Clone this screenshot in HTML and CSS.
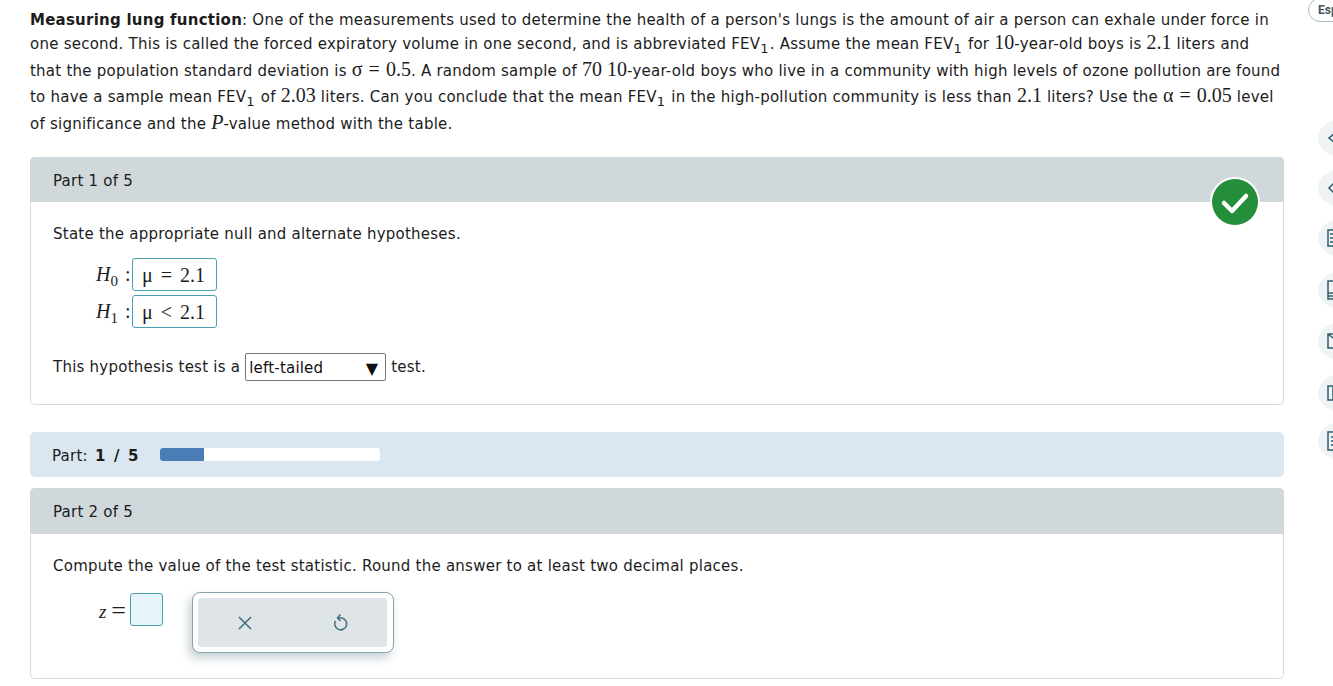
FILE: index.html
```html
<!DOCTYPE html>
<html lang="en">
<head>
<meta charset="utf-8">
<title>Measuring lung function</title>
<link rel="stylesheet" href="styles.css">
</head>
<body>
<div class="page">
  <main class="main">
    <div class="problem">
      <div class="line l1"><b>Measuring lung function</b>: One of the measurements used to determine the health of a person's lungs is the amount of air a person can exhale under force in</div>
      <div class="line l2">one second. This is called the forced expiratory volume in one second, and is abbreviated FEV<sub>1</sub>. Assume the mean FEV<sub>1</sub> for <span class="m">10</span>-year-old boys is <span class="m">2.1</span> liters and</div>
      <div class="line l3">that the population standard deviation is <span class="m">σ = 0.5</span>. A random sample of <span class="m">70</span> <span class="m">10</span>-year-old boys who live in a community with high levels of ozone pollution are found</div>
      <div class="line l4">to have a sample mean FEV<sub>1</sub> of <span class="m">2.03</span> liters. Can you conclude that the mean FEV<sub>1</sub> in the high-pollution community is less than <span class="m">2.1</span> liters? Use the <span class="m">α = 0.05</span> level</div>
      <div class="line l5">of significance and the <i class="m">P</i>-value method with the table.</div>
    </div>

    <section class="card card-one">
      <header class="card-head">Part 1 of 5</header>
      <div class="badge">
        <svg width="46" height="46" viewBox="0 0 46 46"><circle cx="23" cy="23" r="23" fill="#258e3a"/><path d="M12 24l8 8 14-15" fill="none" stroke="#fff" stroke-width="4.5" stroke-linecap="round" stroke-linejoin="round"/></svg>
      </div>
      <div class="card-body">
        <p class="prompt">State the appropriate null and alternate hypotheses.</p>
        <div class="hyps">
          <div class="hyp"><span class="hlabel"><i>H</i><sub>0</sub></span><span class="colon">:</span><span class="hbox">μ = 2.1</span></div>
          <div class="hyp"><span class="hlabel"><i>H</i><sub>1</sub></span><span class="colon">:</span><span class="hbox">μ &lt; 2.1</span></div>
        </div>
        <div class="tail">This hypothesis test is a <span class="select"><span>left-tailed</span><span class="arrow">▼</span></span> test.</div>
      </div>
    </section>

    <div class="progress">
      <span class="plabel">Part: <b>1 / 5</b></span>
      <span class="track"><span class="fill" style="width:20%"></span></span>
    </div>

    <section class="card card-two">
      <header class="card-head head-tall">Part 2 of 5</header>
      <div class="card-body">
        <p class="prompt">Compute the value of the test statistic. Round the answer to at least two decimal places.</p>
        <div class="answer">
          <span class="zlabel"><i>z</i> <span class="eq">=</span></span>
          <span class="input"></span>
          <div class="tools">
            <div class="tools-in">
              <svg width="16" height="16" viewBox="0 0 16 16"><path d="M2 2l12 12M14 2L2 14" stroke="#47707f" stroke-width="1.6" fill="none"/></svg>
              <svg width="18" height="20" viewBox="0 0 18 20"><path d="M6 5h4a6 6 0 1 1-6.600 3M8.500 1.500L5.500 5l3 3" stroke="#47707f" stroke-width="1.6" fill="none"/></svg>
            </div>
          </div>
        </div>
      </div>
    </section>
  </main>

  <aside class="rail">
    <span class="lang">Esp</span>
    <span class="rb r1"><svg width="12" height="14" viewBox="0 0 12 14"><path d="M7 3L2 7l5 4" fill="none" stroke="#2f5d6e" stroke-width="1.500"/></svg></span>
    <span class="rb r2"><svg width="12" height="18" viewBox="0 0 12 18"><path d="M9 2L2 9l7 7" fill="none" stroke="#2f5d6e" stroke-width="1.500"/></svg></span>
    <span class="rb r3"><svg width="12" height="18" viewBox="0 0 12 18"><path d="M10 1H1v16h9M3 5h7M3 9h7M3 13h7" fill="none" stroke="#2f5d6e" stroke-width="1.500"/></svg></span>
    <span class="rb r4"><svg width="12" height="20" viewBox="0 0 12 20"><path d="M10 1H1v18h9M1 13h9M1 16h9" fill="none" stroke="#2f5d6e" stroke-width="1.500"/></svg></span>
    <span class="rb r5"><svg width="12" height="16" viewBox="0 0 12 16"><path d="M10 1H1v14h9M1 1l9 7" fill="none" stroke="#2f5d6e" stroke-width="1.500"/></svg></span>
    <span class="rb r6"><svg width="12" height="16" viewBox="0 0 12 16"><path d="M1 1h5v14H1zM10 1v14" fill="none" stroke="#2f5d6e" stroke-width="1.500"/></svg></span>
    <span class="rb r7"><svg width="12" height="20" viewBox="0 0 12 20"><path d="M10 1H1v18h9M4 6h6M4 10h6M4 14h6" fill="none" stroke="#2f5d6e" stroke-width="1.500"/></svg></span>
  </aside>
</div>
</body>
</html>
```
FILE: styles.css
```css
html, body { margin: 0; padding: 0; height: 686px; overflow: hidden; background: #fff; }
body { font-family: "DejaVu Sans", Verdana, sans-serif; font-size: 15px; color: #1c1c1c; letter-spacing: .24px; }
.page { display: flex; height: 686px; overflow: hidden; }
.main { width: 1254px; margin-left: 30px; flex: none; padding-top: 8px; }
.problem { height: 149px; }
.line { white-space: nowrap; line-height: 24px; height: 24px; }
.l1 { height: 22px; }
.l2 { height: 27px; }
.l3 { height: 26px; }
.l4 { height: 27px; }
.m { font-family: "Liberation Serif", serif; font-size: 20px; letter-spacing: 0; word-spacing: 1px; }
sub { font-size: 13px; line-height: 0; }
.line sub { margin-right: 1px; }
.card { border: 1px solid #d3dcdf; border-top: none; border-radius: 5px; box-sizing: border-box; position: relative; }
.card-one { height: 248px; }
.card-two { height: 191px; }
.card-head { background: #d0d8db; height: 45px; line-height: 48px; padding-left: 23px; border-radius: 5px 5px 0 0; margin: 0 -1px; }
.head-tall { height: 46px; }
.card-body { padding: 0 22px; }
.badge { position: absolute; left: 1179px; top: 20px; width: 46px; height: 46px; border: 2px solid #fff; border-radius: 50%; }
.badge svg { display: block; }
.prompt { margin: 0; padding-top: 22px; line-height: 20px; }
.hyps { margin: 14px 0 0 43px; display: flex; flex-direction: column; gap: 4px; font-family: "Liberation Serif", serif; font-size: 20px; letter-spacing: 0; }
.hyp { display: flex; align-items: center; height: 33px; }
.hlabel { width: 29px; line-height: 35px; }
.hlabel sub { font-size: 15px; }
.colon { width: 7px; }
.hbox { box-sizing: border-box; width: 85px; height: 33px; line-height: 33px; border: 1.5px solid #4a9fb0; border-radius: 3px; padding-left: 9px; word-spacing: 3px; }
.tail { margin-top: 25px; line-height: 27px; display: flex; align-items: center; gap: 5px; }
.select { box-sizing: border-box; display: inline-flex; justify-content: space-between; align-items: center; width: 141px; height: 28px; border: 1px solid #767676; border-radius: 2px; padding: 3px 7px 0 3px; font-size: 15px; letter-spacing: .2px; color: #111; background: #fff; margin-left: 0; }
.arrow { font-size: 16px; }
.progress { margin: 27px 0 11px; height: 45px; background: #dae6f0; border-radius: 5px; display: flex; align-items: center; padding-left: 22px; padding-top: 3px; box-sizing: border-box; }
.plabel { width: 108px; }
.plabel b { margin-left: 2px; letter-spacing: 1.2px; word-spacing: 1px; }
.track { width: 220px; height: 13px; margin-top: -3px; background: #fff; border-radius: 3px; overflow: hidden; display: block; }
.fill { display: block; height: 100%; background: #4a7db5; }
.answer { display: flex; align-items: flex-start; margin: 17px 0 0 46px; }
.zlabel { width: 31px; font-family: "Liberation Serif", serif; font-size: 19px; height: 27px; line-height: 27px; padding-top: 5px; letter-spacing: 0; word-spacing: 0; white-space: nowrap; box-sizing: content-box; }
.eq { font-size: 26px; line-height: 0; vertical-align: -1px; }
.input { box-sizing: border-box; width: 33px; height: 33px; margin-top: 0; background: #e6f4fa; border: 1.5px solid #4a9fb0; border-radius: 3px; }
.tools { box-sizing: border-box; width: 202px; height: 61px; margin-left: 29px; margin-top: -1px; padding: 5px 6px 5px 5px; background: #fff; border: 1px solid #86a3ae; border-radius: 8px; box-shadow: -3px 5px 10px rgba(90,120,130,.35); }
.tools-in { height: 100%; background: #dfe5e7; border-radius: 3px; display: flex; align-items: center; gap: 79px; padding-left: 39px; }
.rail { position: relative; flex: 1; }
.lang { position: absolute; left: 24px; top: -2px; width: 60px; height: 22px; line-height: 22px; border: 1px solid #a9bcc3; border-radius: 12px; padding-left: 9px; font-family: Roboto, sans-serif; font-size: 12px; font-weight: bold; letter-spacing: 0; color: #3e5763; }
.rb { position: absolute; left: 34px; width: 38px; height: 38px; border-radius: 50%; background: #f0f3f4; display: flex; align-items: center; padding-left: 9px; }
.r1 { top: 119px; } .r2 { top: 169px; } .r3 { top: 219px; } .r4 { top: 271px; } .r5 { top: 322px; } .r6 { top: 374px; } .r7 { top: 422px; }
```
